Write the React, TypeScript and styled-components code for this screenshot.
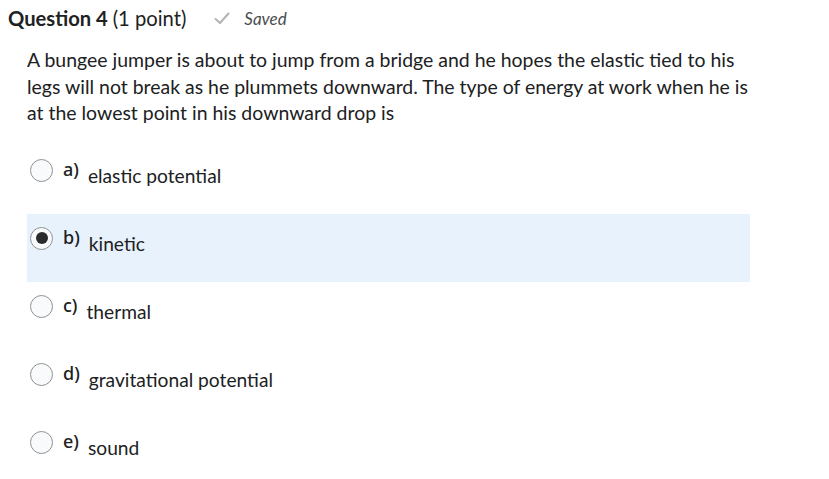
import React from "react";
import styled, { createGlobalStyle } from "styled-components";

const Global = createGlobalStyle`
  html, body { margin: 0; padding: 0; background: #fff; }
  body { font-family: Lato, "Noto Sans", sans-serif; color: #202122; }
`;

const Page = styled.div`
  width: 829px;
  height: 479px;
  box-sizing: border-box;
  padding: 5px 0 0 8px;
`;

const Header = styled.div`
  display: flex;
  align-items: center;
  height: 26px;
`;

const Title = styled.h2`
  margin: 0;
  font-size: 20.2px;
  font-weight: 700;
  color: #202122;
  span { font-weight: 400; }
`;

const Status = styled.div`
  display: flex;
  align-items: center;
  gap: 14px;
  margin-left: 28px;
  font-size: 17px;
  font-style: italic;
  color: #494c4e;
`;

const Body = styled.div`
  padding-left: 19px;
`;

const Prompt = styled.p`
  margin: 16px 0 0;
  width: 730px;
  font-size: 19.45px;
  line-height: 26.5px;
  color: #202122;
`;

const Options = styled.div`
  margin-top: 19px;
  width: 723px;
  display: flex;
  flex-direction: column;
`;

const Row = styled.label<{ $selected?: boolean }>`
  display: flex;
  align-items: flex-start;
  height: 68px;
  padding: 13px 0 0 3px;
  box-sizing: border-box;
  background: ${(p) => (p.$selected ? "#e8f2fc" : "transparent")};
`;

const Radio = styled.span<{ $checked?: boolean }>`
  flex: none;
  width: 23px;
  height: 23px;
  border-radius: 50%;
  border: 1px solid #8f9193;
  background: #f9fafb;
  box-sizing: border-box;
  display: flex;
  align-items: center;
  justify-content: center;
  margin-right: 10px;
  &::after {
    content: "";
    display: ${(p) => (p.$checked ? "block" : "none")};
    width: 12px;
    height: 12px;
    border-radius: 50%;
    background: #2a2b2c;
  }
`;

const Letter = styled.span`
  font-family: "Noto Sans", "Open Sans", sans-serif;
  font-size: 18px;
  line-height: 23px;
  font-weight: 500;
  color: #202122;
  margin-right: 9px;
  position: relative;
  top: -1px;
`;

const Answer = styled.span`
  font-size: 19.2px;
  line-height: 23px;
  color: #202122;
  position: relative;
  top: 5px;
`;

const Check = () => (
  <svg width="16" height="13" viewBox="0 0 16 13">
    <path d="M1.5 7 L6 11 L14.5 1.5" fill="none" stroke="#b1b3b5" strokeWidth="2" strokeLinecap="round" strokeLinejoin="round" />
  </svg>
);

const options = [
  { l: "a)", t: "elastic potential" },
  { l: "b)", t: "kinetic", sel: true },
  { l: "c)", t: "thermal" },
  { l: "d)", t: "gravitational potential" },
  { l: "e)", t: "sound" },
];

export default function App() {
  return (
    <Page>
      <Global />
      <Header>
        <Title>
          Question 4 <span>(1 point)</span>
        </Title>
        <Status>
          <Check />
          Saved
        </Status>
      </Header>
      <Body>
        <Prompt>
          A bungee jumper is about to jump from a bridge and he hopes the elastic tied to his legs will not break as he plummets downward. The type of energy at work when he is at the lowest point in his downward drop is
        </Prompt>
        <Options>
          {options.map((o) => (
            <Row key={o.l} $selected={o.sel}>
              <Radio $checked={o.sel} />
              <Letter>{o.l}</Letter>
              <Answer>{o.t}</Answer>
            </Row>
          ))}
        </Options>
      </Body>
    </Page>
  );
}
